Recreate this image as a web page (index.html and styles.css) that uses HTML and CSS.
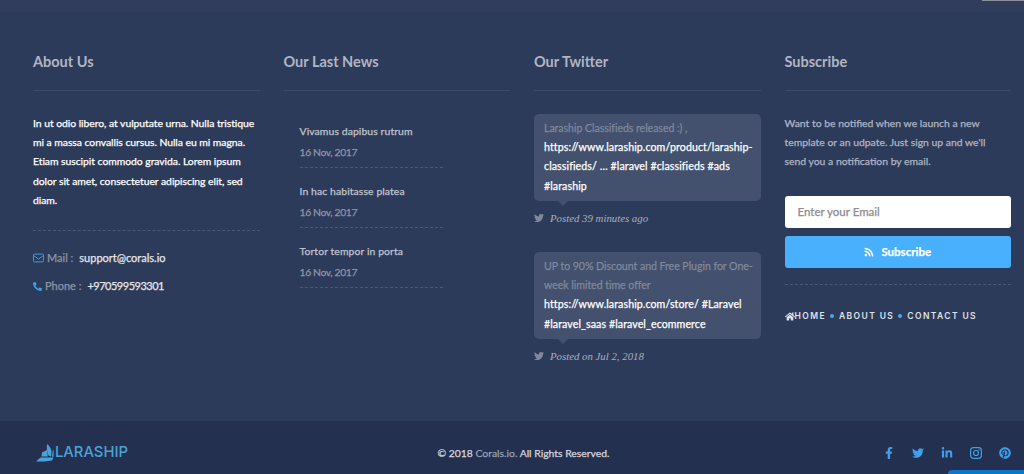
FILE: index.html
```html
<!DOCTYPE html>
<html lang="en">
<head>
    <meta charset="UTF-8">
    <title>Laraship - Footer</title>
    <link rel="stylesheet" href="styles.css">
</head>
<body>
<div class="top-strip"><span class="top-tab"></span></div>
<footer class="footer">
    <div class="columns">
        <section class="col">
            <h4 class="col-title">About Us</h4>
            <p class="about-text">In ut odio libero, at vulputate urna. Nulla tristique mi a massa convallis cursus. Nulla eu mi magna. Etiam suscipit commodo gravida. Lorem ipsum dolor sit amet, consectetuer adipiscing elit, sed diam.</p>
            <div class="contact">
                <div class="contact-row">
                    <svg class="contact-icon" viewBox="0 0 14 12"><rect x="0.6" y="1" width="12.8" height="10" rx="1.4"/><path d="M1 3l6 4.4L13 3"/></svg>
                    <span class="contact-label">Mail :</span>
                    <span class="contact-value">support@corals.io</span>
                </div>
                <div class="contact-row">
                    <svg class="contact-phone" viewBox="0 0 512 512"><path d="M493.4 24.6l-104-24c-11.3-2.6-22.9 3.3-27.5 13.9l-48 112c-4.2 9.8-1.4 21.3 6.9 28l60.6 49.6c-36 76.7-98.9 140.5-177.2 177.2l-49.6-60.6c-6.8-8.3-18.2-11.1-28-6.9l-112 48C3.9 366.5-2 378.1.6 389.4l24 104C27.1 504.2 36.7 512 48 512c256.1 0 464-207.5 464-464 0-11.2-7.7-20.9-18.6-23.4z"/></svg>
                    <span class="contact-label">Phone :</span>
                    <span class="contact-value contact-number">+970599593301</span>
                </div>
            </div>
        </section>

        <section class="col">
            <h4 class="col-title">Our Last News</h4>
            <ul class="news">
                <li>
                    <div class="news-title">Vivamus dapibus rutrum</div>
                    <div class="news-date">16 Nov, 2017</div>
                </li>
                <li>
                    <div class="news-title">In hac habitasse platea</div>
                    <div class="news-date">16 Nov, 2017</div>
                </li>
                <li>
                    <div class="news-title">Tortor tempor in porta</div>
                    <div class="news-date">16 Nov, 2017</div>
                </li>
            </ul>
        </section>

        <section class="col">
            <h4 class="col-title">Our Twitter</h4>
            <div class="tweet">
                <div class="tweet-bubble">Laraship Classifieds released :) , <a class="tweet-link">https://www.laraship.com/product/laraship-classifieds/ … #laravel #classifieds #ads #laraship</a></div>
                <div class="tweet-meta">
                    <svg class="tweet-bird" viewBox="0 0 512 512"><path d="M459.37 151.716c.325 4.548.325 9.097.325 13.645 0 138.72-105.583 298.558-298.558 298.558-59.452 0-114.68-17.219-161.137-47.106 8.447.974 16.568 1.299 25.34 1.299 49.055 0 94.213-16.568 130.274-44.832-46.132-.975-84.792-31.188-98.112-72.772 6.498.974 12.995 1.624 19.818 1.624 9.421 0 18.843-1.3 27.614-3.573-48.081-9.747-84.143-51.98-84.143-102.985v-1.299c13.969 7.797 30.214 12.67 47.431 13.319-28.264-18.843-46.781-51.005-46.781-87.391 0-19.492 5.197-37.36 14.294-52.954 51.655 63.675 129.3 105.258 216.365 109.807-1.624-7.797-2.599-15.918-2.599-24.04 0-57.828 46.782-104.934 104.934-104.934 30.213 0 57.502 12.67 76.67 33.137 23.715-4.548 46.456-13.32 66.599-25.34-7.798 24.366-24.366 44.833-46.132 57.827 21.117-2.273 41.584-8.122 60.426-16.243-14.292 20.791-32.161 39.308-52.628 54.253z"/></svg>
                    <span>Posted 39 minutes ago</span>
                </div>
            </div>
            <div class="tweet">
                <div class="tweet-bubble">UP to 90% Discount and Free Plugin for One-week limited time offer <a class="tweet-link">https://www.laraship.com/store/ #Laravel #laravel_saas #laravel_ecommerce</a></div>
                <div class="tweet-meta">
                    <svg class="tweet-bird" viewBox="0 0 512 512"><path d="M459.37 151.716c.325 4.548.325 9.097.325 13.645 0 138.72-105.583 298.558-298.558 298.558-59.452 0-114.68-17.219-161.137-47.106 8.447.974 16.568 1.299 25.34 1.299 49.055 0 94.213-16.568 130.274-44.832-46.132-.975-84.792-31.188-98.112-72.772 6.498.974 12.995 1.624 19.818 1.624 9.421 0 18.843-1.3 27.614-3.573-48.081-9.747-84.143-51.98-84.143-102.985v-1.299c13.969 7.797 30.214 12.67 47.431 13.319-28.264-18.843-46.781-51.005-46.781-87.391 0-19.492 5.197-37.36 14.294-52.954 51.655 63.675 129.3 105.258 216.365 109.807-1.624-7.797-2.599-15.918-2.599-24.04 0-57.828 46.782-104.934 104.934-104.934 30.213 0 57.502 12.67 76.67 33.137 23.715-4.548 46.456-13.32 66.599-25.34-7.798 24.366-24.366 44.833-46.132 57.827 21.117-2.273 41.584-8.122 60.426-16.243-14.292 20.791-32.161 39.308-52.628 54.253z"/></svg>
                    <span>Posted on Jul 2, 2018</span>
                </div>
            </div>
        </section>

        <section class="col">
            <h4 class="col-title">Subscribe</h4>
            <p class="sub-text">Want to be notified when we launch a new template or an udpate. Just sign up and we'll send you a notification by email.</p>
            <input class="sub-input" type="text" placeholder="Enter your Email">
            <button class="sub-button">
                <svg class="sub-rss" viewBox="0 0 448 512"><path d="M128.081 415.959c0 35.369-28.672 64.041-64.041 64.041S0 451.328 0 415.959s28.672-64.041 64.041-64.041 64.04 28.673 64.04 64.041zm175.66 47.25c-8.354-154.6-132.185-278.587-286.95-286.95C7.656 175.765 0 183.105 0 192.253v48.069c0 8.415 6.49 15.472 14.887 16.018 111.832 7.284 201.473 96.702 208.772 208.772.547 8.397 7.604 14.887 16.018 14.887h48.069c9.149.001 16.489-7.655 15.995-16.79zm144.249.288C439.596 229.677 251.465 40.445 16.503 32.01 7.473 31.686 0 38.981 0 48.016v48.068c0 8.625 6.835 15.645 15.453 15.999 191.179 7.839 344.627 161.316 352.465 352.465.353 8.618 7.373 15.453 15.999 15.453h48.068c9.034-.001 16.329-7.474 16.005-16.504z"/></svg>
                Subscribe
            </button>
            <div class="quick-links">
                <svg class="home-icon" viewBox="0 0 576 512"><path d="M280.37 148.26L96 300.11V464a16 16 0 0 0 16 16l112.06-.29a16 16 0 0 0 15.92-16V368a16 16 0 0 1 16-16h64a16 16 0 0 1 16 16v95.64a16 16 0 0 0 16 16.05L464 480a16 16 0 0 0 16-16V300L295.67 148.26a12.19 12.19 0 0 0-15.3 0zM571.6 251.47L488 182.56V44.05a12 12 0 0 0-12-12h-56a12 12 0 0 0-12 12v72.61L318.47 43a48 48 0 0 0-61 0L4.34 251.47a12 12 0 0 0-1.6 16.9l25.5 31A12 12 0 0 0 45.15 301l235.22-193.74a12.19 12.19 0 0 1 15.3 0L530.9 301a12 12 0 0 0 16.9-1.6l25.5-31a12 12 0 0 0-1.7-16.93z"/></svg>
                <span>HOME</span>
                <i class="dot"></i>
                <span>ABOUT US</span>
                <i class="dot"></i>
                <span>CONTACT US</span>
            </div>
        </section>
    </div>
</footer>
<div class="copyright-bar">
    <div class="logo">
        <svg class="logo-mark" viewBox="0 0 18 18"><path d="M11 0c2.500 2 4 4.500 4.500 7.500l-.5 5-2.500-1C11 8 10.500 4 11 0z"/><path d="M17 5c.8 2.500.8 5 .3 8l-1.500-.5z"/><path d="M6 8.500l5-2.500 .8 6.500-6.300 0z"/><path d="M0 17.500l4.500-4h13l-1.500 3-7.500 1z"/></svg>
        <span class="logo-text">LARASHIP</span>
    </div>
    <div class="copyright">© 2018 <span class="copyright-link">Corals.io.</span> All Rights Reserved.</div>
    <div class="social">
        <svg class="social-icon" viewBox="0 0 320 512"><path d="M279.14 288l14.22-92.66h-88.91v-60.13c0-25.35 12.42-50.06 52.24-50.06h40.42V6.26S260.43 0 225.36 0c-73.22 0-121.08 44.38-121.08 124.72v70.62H22.89V288h81.39v224h100.17V288z"/></svg>
        <svg class="social-icon" viewBox="0 0 512 512"><path d="M459.37 151.716c.325 4.548.325 9.097.325 13.645 0 138.72-105.583 298.558-298.558 298.558-59.452 0-114.68-17.219-161.137-47.106 8.447.974 16.568 1.299 25.34 1.299 49.055 0 94.213-16.568 130.274-44.832-46.132-.975-84.792-31.188-98.112-72.772 6.498.974 12.995 1.624 19.818 1.624 9.421 0 18.843-1.3 27.614-3.573-48.081-9.747-84.143-51.98-84.143-102.985v-1.299c13.969 7.797 30.214 12.67 47.431 13.319-28.264-18.843-46.781-51.005-46.781-87.391 0-19.492 5.197-37.36 14.294-52.954 51.655 63.675 129.3 105.258 216.365 109.807-1.624-7.797-2.599-15.918-2.599-24.04 0-57.828 46.782-104.934 104.934-104.934 30.213 0 57.502 12.67 76.67 33.137 23.715-4.548 46.456-13.32 66.599-25.34-7.798 24.366-24.366 44.833-46.132 57.827 21.117-2.273 41.584-8.122 60.426-16.243-14.292 20.791-32.161 39.308-52.628 54.253z"/></svg>
        <svg class="social-icon" viewBox="0 0 448 512"><path d="M100.28 448H7.4V148.9h92.88zM53.79 108.1C24.09 108.1 0 83.5 0 53.8a53.79 53.79 0 0 1 107.58 0c0 29.7-24.1 54.3-53.79 54.3zM447.9 448h-92.68V302.4c0-34.7-.7-79.2-48.29-79.2-48.29 0-55.69 37.7-55.69 76.7V448h-92.78V148.9h89.08v40.8h1.3c12.4-23.5 42.69-48.3 87.88-48.3 94 0 111.28 61.9 111.28 142.3V448z"/></svg>
        <svg class="social-insta" viewBox="0 0 12 12"><rect x="0.6" y="0.6" width="10.800" height="10.800" rx="2.800"/><circle cx="6" cy="6" r="2.500"/><circle class="insta-dot" cx="9" cy="3" r="0.650"/></svg>
        <svg class="social-icon" viewBox="0 0 496 512"><path d="M496 256c0 137-111 248-248 248-25.6 0-50.2-3.9-73.4-11.1 10.1-16.5 25.2-43.5 30.8-65 3-11.6 15.4-59 15.4-59 8.1 15.4 31.7 28.5 56.8 28.5 74.8 0 128.7-68.8 128.7-154.3 0-81.9-66.9-143.2-152.9-143.2-107 0-163.9 71.8-163.9 150.1 0 36.4 19.4 81.7 50.3 96.1 4.7 2.2 7.2 1.2 8.3-3.3.8-3.4 5-20.3 6.9-28.1.6-2.5.3-4.7-1.7-7.1-10.1-12.5-18.3-35.3-18.3-56.6 0-54.7 41.4-107.6 112-107.6 60.9 0 103.6 41.5 103.6 100.9 0 67.1-33.9 113.6-78 113.6-24.3 0-42.6-20.1-36.7-44.8 7-29.5 20.5-61.3 20.5-82.6 0-19-10.2-34.9-31.4-34.9-24.9 0-44.9 25.7-44.9 60.2 0 22 7.4 36.8 7.4 36.8s-24.5 103.8-29 123.2c-5 21.4-3 51.6-.9 71.2C65.4 450.9 0 361.1 0 256 0 119 111 8 248 8s248 111 248 248z"/></svg>
    </div>
</div>
<div class="corner-tab"></div>
</body>
</html>
```

FILE: styles.css
```css
html, body {
    height: 474px;
    overflow: hidden;
}
body {
    margin: 0;
    background: #2d3b5a;
    color: #fff;
    font-family: "Lato", "Open Sans", sans-serif;
    font-size: 10.4px;
    line-height: 19.2px;
    font-weight: 400;
    -webkit-text-stroke: 0.25px;
}
.top-strip {
    height: 12px;
    background: #303e5c;
    display: flex;
    justify-content: flex-end;
}
.top-tab {
    width: 42px;
    height: 1px;
    background: #8a90a0;
}
.footer {
    height: 409px;
    background: #2d3b5a;
}
.columns {
    display: grid;
    grid-template-columns: repeat(4, minmax(0, 1fr));
    column-gap: 24px;
    padding: 37px 13px 0 33px;
}
.col-title {
    height: 41px;
    margin: 0 0 23px;
    border-bottom: 1px solid #3c4a6b;
    font-size: 14.5px;
    line-height: 26px;
    font-weight: 700;
    -webkit-text-stroke: 0;
    color: #b0b5c2;
}
.about-text {
    margin: 0;
    padding-bottom: 20px;
    border-bottom: 1px dashed #4c5873;
    letter-spacing: -0.05px;
}
.contact {
    margin-top: 13px;
}
.contact-row {
    display: flex;
    align-items: center;
    height: 28px;
}
.contact-icon {
    width: 11px;
    height: 10px;
    margin-right: 3px;
    fill: none;
    stroke: #3f9fe8;
    stroke-width: 1.2;
}
.contact-phone {
    width: 9px;
    height: 9px;
    margin-right: 3px;
    fill: #3f9fe8;
    transform: scaleX(-1);
}
.contact-label {
    color: #8d94a6;
    font-size: 11px;
    margin-right: 6px;
}
.contact-value {
    color: #e4e6eb;
    font-size: 11px;
}
.contact-number {
    letter-spacing: -0.5px;
}
.news {
    list-style: none;
    margin: 0;
    padding: 7px 67px 0 16px;
}
.news li {
    padding-bottom: 5px;
    border-bottom: 1px dashed #4c5873;
}
.news li + li {
    margin-top: 13px;
}
.news-title {
    height: 20px;
    line-height: 20px;
    letter-spacing: 0.1px;
    color: #c0c4ce;
}
.news-date {
    height: 21px;
    line-height: 22px;
    color: #8d94a6;
    letter-spacing: -0.4px;
}
.tweet {
    margin-bottom: 24px;
}
.tweet-bubble {
    position: relative;
    padding: 5px 7px 5px 10px;
    background: #43506e;
    border-radius: 5px;
    color: #7f889c;
    font-size: 10.6px;
    letter-spacing: -0.05px;
}
.tweet-bubble::after {
    content: "";
    position: absolute;
    left: 24px;
    bottom: -5px;
    border-left: 5px solid transparent;
    border-right: 5px solid transparent;
    border-top: 5px solid #43506e;
}
.tweet-link {
    color: #fff;
    letter-spacing: 0.1px;
}
.tweet-meta {
    display: flex;
    align-items: center;
    margin-top: 8px;
    font-family: "Liberation Serif", serif;
    font-style: italic;
    font-size: 10.8px;
    -webkit-text-stroke: 0;
    color: #a9aebb;
}
.tweet-bird {
    width: 10px;
    height: 10px;
    margin-right: 6px;
    fill: #7f889c;
}
.sub-text {
    margin: 0 0 24px;
    padding-right: 12px;
    color: #b0b5c2;
}
.sub-input {
    display: block;
    box-sizing: border-box;
    width: 100%;
    height: 32px;
    padding: 0 13px;
    border: 0;
    border-radius: 3px;
    background: #fff;
    font: 400 11.5px "Lato", sans-serif;
}
.sub-input::placeholder {
    color: #8d8a90;
}
.sub-button {
    display: flex;
    align-items: center;
    justify-content: center;
    width: 100%;
    height: 32px;
    margin-top: 8px;
    border: 0;
    border-radius: 3px;
    background: #48b0fd;
    color: #fff;
    font: 700 11.5px "Lato", sans-serif;
}
.sub-rss {
    width: 10px;
    height: 10px;
    margin-right: 7px;
    fill: #fff;
}
.quick-links {
    display: flex;
    align-items: center;
    margin-top: 16px;
    padding-top: 22px;
    border-top: 1px dashed #4c5873;
    font-family: "Inter", sans-serif;
    font-weight: 600;
    font-size: 8.5px;
    letter-spacing: 1.4px;
    -webkit-text-stroke: 0;
    color: #dfe2e8;
}
.home-icon {
    width: 10px;
    height: 9px;
    fill: #dfe2e8;
}
.dot {
    width: 4px;
    height: 4px;
    margin: 0 5px 0 4px;
    border-radius: 50%;
    background: #48a8f0;
}
.copyright-bar {
    display: grid;
    grid-template-columns: 1fr auto 1fr;
    align-items: center;
    box-sizing: border-box;
    height: 53px;
    padding: 11px 13px 0 36px;
    background: #233050;
}
.logo {
    display: flex;
    align-items: center;
}
.logo-mark {
    width: 18px;
    height: 18px;
    fill: #4ba3d8;
}
.logo-text {
    margin-left: 1px;
    font-family: "Inter", sans-serif;
    font-size: 14.8px;
    font-weight: 500;
    -webkit-text-stroke: 0;
    color: #4ba3d8;
}
.copyright {
    margin-top: 1px;
    color: #d5d8df;
}
.copyright-link {
    color: #9aa1b1;
}
.social {
    display: flex;
    align-items: center;
    justify-content: flex-end;
    gap: 17px;
}
.social-icon {
    width: 12px;
    height: 12px;
    fill: #3f9fe8;
}
.social-insta {
    width: 12px;
    height: 12px;
    fill: none;
    stroke: #3f9fe8;
    stroke-width: 1.2;
}
.insta-dot {
    fill: #3f9fe8;
    stroke: none;
}
.corner-tab {
    position: fixed;
    right: 0;
    bottom: 0;
    width: 76px;
    height: 4px;
    border-top-left-radius: 4px;
    background: #0b76cc;
}
```
